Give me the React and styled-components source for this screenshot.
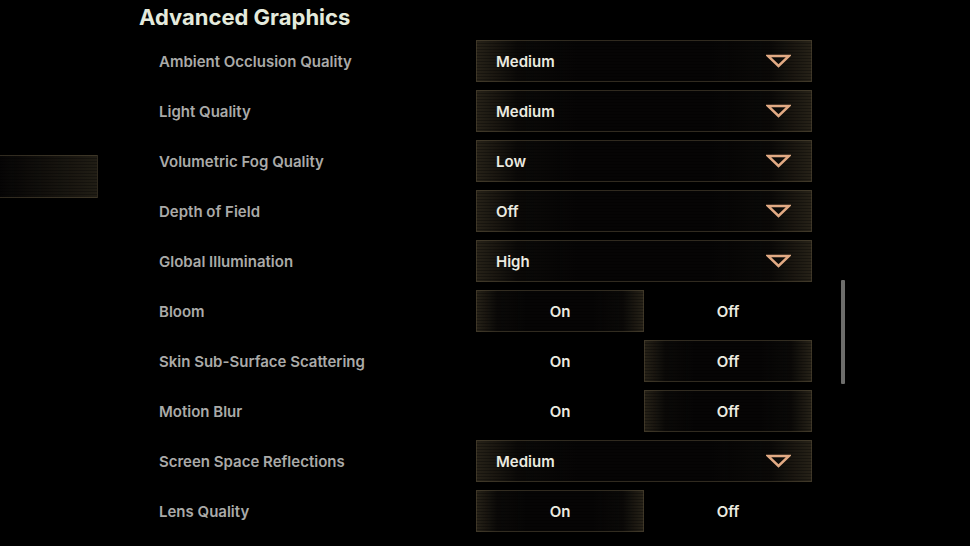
import React from "react";
import styled, { createGlobalStyle } from "styled-components";

const GlobalStyle = createGlobalStyle`
  html, body {
    margin: 0;
    padding: 0;
    background: #000;
    overflow: hidden;
  }
  body {
    font-family: "Inter", "Lato", "Liberation Sans", sans-serif;
  }
`;

const panelSurface = `
  background-color: #060505;
  background-image:
    repeating-linear-gradient(
      to bottom,
      rgba(0, 0, 0, 0) 0px,
      rgba(0, 0, 0, 0) 2px,
      rgba(0, 0, 0, 0.3) 2px,
      rgba(0, 0, 0, 0.3) 3px
    ),
    linear-gradient(
      to right,
      rgba(52, 45, 31, 0.7) 0%,
      rgba(20, 18, 13, 0.35) 12%,
      rgba(0, 0, 0, 0) 30%,
      rgba(0, 0, 0, 0) 70%,
      rgba(20, 18, 13, 0.35) 88%,
      rgba(52, 45, 31, 0.7) 100%
    );
  border: 1px solid rgba(90, 80, 58, 0.5);
  box-sizing: border-box;
`;

const Page = styled.div`
  position: relative;
  width: 970px;
  height: 546px;
  display: flex;
  background: #000;
  overflow: hidden;
`;

const Sidebar = styled.nav`
  width: 98px;
  padding-top: 155px;
  flex-shrink: 0;
`;

const SideTab = styled.div`
  ${panelSurface}
  height: 43px;
  border-left: none;
  background-image:
    repeating-linear-gradient(
      to bottom,
      rgba(0, 0, 0, 0) 0px,
      rgba(0, 0, 0, 0) 2px,
      rgba(0, 0, 0, 0.3) 2px,
      rgba(0, 0, 0, 0.3) 3px
    ),
    linear-gradient(to right, rgba(0, 0, 0, 0) 0%, rgba(44, 39, 27, 0.7) 100%);
`;

const Main = styled.main`
  margin-left: 41px;
  display: flex;
  flex-direction: column;
`;

const Title = styled.h1`
  margin: 4px 0 0;
  height: 36px;
  font-size: 22px;
  font-weight: 700;
  color: #e4eadc;
`;

const Rows = styled.div`
  display: flex;
  flex-direction: column;
`;

const Row = styled.div`
  display: grid;
  grid-template-columns: 337px 336px;
  height: 50px;
  align-items: start;
`;

const Label = styled.div`
  padding-left: 20px;
  height: 42px;
  display: flex;
  align-items: center;
  font-size: 15px;
  font-weight: 600;
  color: #aaaaa8;
`;

const Dropdown = styled.div`
  ${panelSurface}
  height: 42px;
  display: flex;
  align-items: center;
  justify-content: space-between;
  padding: 0 20px 0 19px;
`;

const Value = styled.span`
  font-size: 15px;
  font-weight: 600;
  color: #ecebe0;
`;

const Toggle = styled.div`
  display: grid;
  grid-template-columns: 168px 168px;
  height: 42px;
`;

const ToggleOption = styled.div`
  display: flex;
  align-items: center;
  justify-content: center;
  font-size: 15px;
  font-weight: 600;
  color: #ecebe0;
  box-sizing: border-box;
  ${(p) => (p.$active ? panelSurface : "border: 1px solid transparent;")}
`;

const Scrollbar = styled.div`
  position: absolute;
  left: 841px;
  top: 280px;
  width: 4px;
  height: 104px;
  background: #6d6d6b;
  border-radius: 1px;
`;

const Caret = () => (
  <svg width="25" height="14" viewBox="0 0 25 14">
    <path
      d="M2 2 H23 L12.5 12 Z"
      fill="none"
      stroke="#e2aa84"
      strokeWidth="2.5"
      strokeLinejoin="miter"
    />
  </svg>
);

const settings = [
  { label: "Ambient Occlusion Quality", type: "select", value: "Medium" },
  { label: "Light Quality", type: "select", value: "Medium" },
  { label: "Volumetric Fog Quality", type: "select", value: "Low" },
  { label: "Depth of Field", type: "select", value: "Off" },
  { label: "Global Illumination", type: "select", value: "High" },
  { label: "Bloom", type: "toggle", value: true },
  { label: "Skin Sub-Surface Scattering", type: "toggle", value: false },
  { label: "Motion Blur", type: "toggle", value: false },
  { label: "Screen Space Reflections", type: "select", value: "Medium" },
  { label: "Lens Quality", type: "toggle", value: true },
];

export default function App() {
  return (
    <>
      <GlobalStyle />
      <Page>
        <Sidebar>
          <SideTab />
        </Sidebar>
        <Main>
          <Title>Advanced Graphics</Title>
          <Rows>
            {settings.map((s) => (
              <Row key={s.label}>
                <Label>{s.label}</Label>
                {s.type === "select" ? (
                  <Dropdown>
                    <Value>{s.value}</Value>
                    <Caret />
                  </Dropdown>
                ) : (
                  <Toggle>
                    <ToggleOption $active={s.value}>On</ToggleOption>
                    <ToggleOption $active={!s.value}>Off</ToggleOption>
                  </Toggle>
                )}
              </Row>
            ))}
          </Rows>
        </Main>
        <Scrollbar />
      </Page>
    </>
  );
}
